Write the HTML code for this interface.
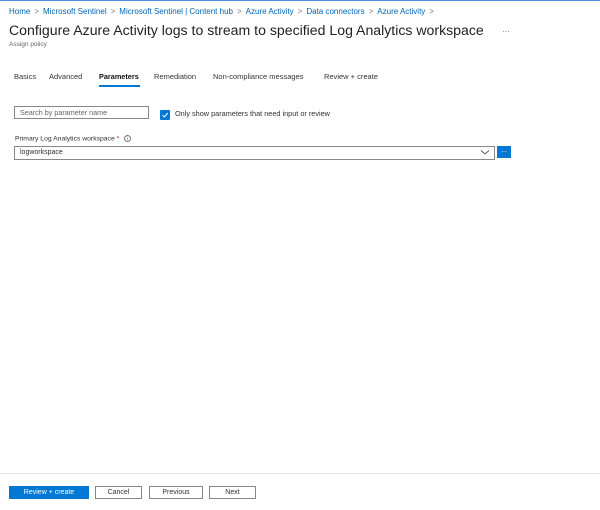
<!DOCTYPE html>
<html><head><style>
body{margin:0;width:600px;height:510px;background:#fff;font-family:"Liberation Sans",sans-serif;color:#323130;position:relative;overflow:hidden}
.a{position:absolute;white-space:nowrap}
.bc{top:7px;left:9px;font-size:8px;color:#0064b4}
.bc span{color:#777;margin:0 4px}
.t{top:22px;left:9px;font-size:14.1px;color:#222}
.tab{top:72px;font-size:7.5px;color:#333}
.btn{top:486px;height:11px;border:1px solid #8a8886;font-size:7px;text-align:center;line-height:11px;box-sizing:content-box}
</style></head><body>
<div class="a" style="top:0;left:0;width:600px;height:1px;background:#4a8fd8"></div>
<div class="a bc">Home<span>&gt;</span>Microsoft Sentinel<span>&gt;</span>Microsoft Sentinel | Content hub<span>&gt;</span>Azure Activity<span>&gt;</span>Data connectors<span>&gt;</span>Azure Activity<span>&gt;</span></div>
<div class="a t">Configure Azure Activity logs to stream to specified Log Analytics workspace</div>
<div class="a" style="top:27px;left:502px;font-size:8px;color:#666">···</div>
<div class="a" style="top:41px;left:9px;font-size:6.5px;color:#666">Assign policy</div>
<div class="a tab" style="left:14px">Basics</div>
<div class="a tab" style="left:49px">Advanced</div>
<div class="a tab" style="left:99px;color:#111;font-weight:bold;font-size:7.3px">Parameters</div>
<div class="a" style="top:85px;left:99px;width:41px;height:1.5px;background:#0078d4"></div>
<div class="a tab" style="left:154px">Remediation</div>
<div class="a tab" style="left:213px">Non-compliance messages</div>
<div class="a tab" style="left:324px">Review + create</div>
<div class="a" style="top:106px;left:14px;height:11px;border:1px solid #8a8886;font-size:7.2px;color:#666;line-height:11px;padding-left:5px;box-sizing:content-box;width:128px">Search by parameter name</div>
<div class="a" style="top:110px;left:160px;width:10px;height:10px;background:#0078d4;border-radius:1px"><svg width="10" height="10" style="display:block"><path d="M2.5 5.2L4.3 7L7.8 3" stroke="#fff" stroke-width="1" fill="none"/></svg></div>
<div class="a" style="top:109px;left:175px;font-size:7.3px">Only show parameters that need input or review</div>
<div class="a" style="top:135px;left:15px;font-size:6.8px">Primary Log Analytics workspace <span style="color:#a4262c">*</span> <span style="display:inline-block;width:5px;height:5px;border:0.8px solid #777;border-radius:50%;font-size:4.5px;line-height:5px;text-align:center;margin-left:3px;vertical-align:middle">i</span></div>
<div class="a" style="top:146px;left:14px;width:474px;height:12px;border:1px solid #8a8886;font-size:7px;line-height:12px;padding-left:5px">logworkspace</div>
<svg class="a" style="top:148px;left:480px" width="10" height="8"><path d="M1 2.5L5 6L9 2.5" stroke="#555" fill="none" stroke-width="0.9"/></svg>
<div class="a" style="top:146px;left:497px;width:14px;height:12px;background:#0078d4;color:#fff;font-size:7px;text-align:center;line-height:10px">...</div>
<div class="a" style="top:473px;left:0;width:600px;height:1px;background:#e5e5e5"></div>
<div class="a btn" style="left:9px;width:78px;background:#0078d4;border-color:#0078d4;color:#fff">Review + create</div>
<div class="a btn" style="left:95px;width:45px">Cancel</div>
<div class="a btn" style="left:149px;width:52px">Previous</div>
<div class="a btn" style="left:209px;width:45px">Next</div>
</body></html>
